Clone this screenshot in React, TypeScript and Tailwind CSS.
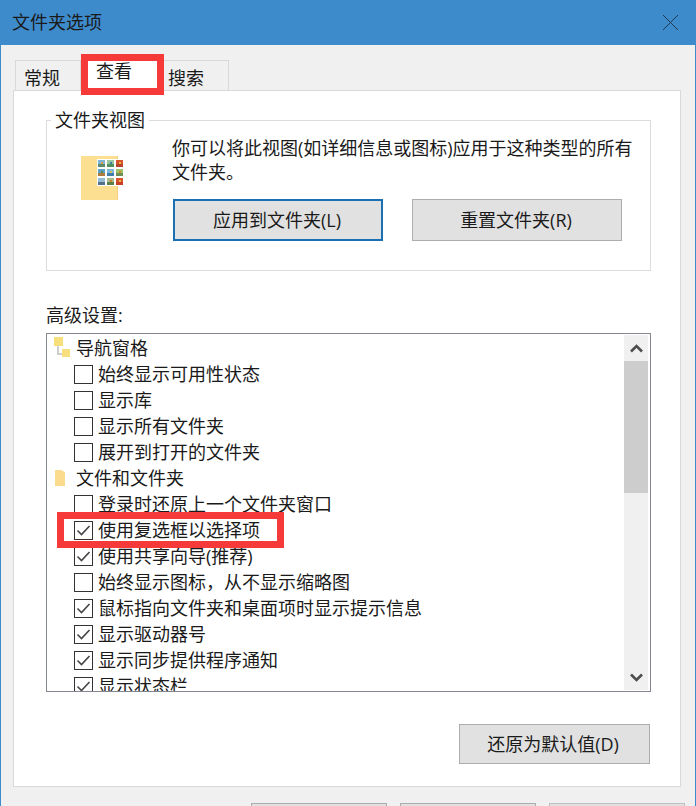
const rows: { label: string; checked?: boolean; icon?: 'nav' | 'folder' }[] = [
  { label: '导航窗格', icon: 'nav' },
  { label: '始终显示可用性状态' },
  { label: '显示库' },
  { label: '显示所有文件夹' },
  { label: '展开到打开的文件夹' },
  { label: '文件和文件夹', icon: 'folder' },
  { label: '登录时还原上一个文件夹窗口' },
  { label: '使用复选框以选择项', checked: true },
  { label: '使用共享向导(推荐)', checked: true },
  { label: '始终显示图标，从不显示缩略图' },
  { label: '鼠标指向文件夹和桌面项时显示提示信息', checked: true },
  { label: '显示驱动器号', checked: true },
  { label: '显示同步提供程序通知', checked: true },
  { label: '显示状态栏', checked: true },
];

// sky, ground and accent colours of the nine little pictures on the folder
const thumbs = [
  ['#7fb2d4', '#5d8a6a', '#e0a23c'],
  ['#9cc6a0', '#4f8f5a', '#3f7fae'],
  ['#d8552b', '#b8432a', '#e8b23c'],
  ['#5aa0c8', '#b07a3a', '#4f8f5a'],
  ['#7fb8dc', '#3f7fae', '#d9c25a'],
  ['#9cc36a', '#6d8f55', '#cf8a2f'],
  ['#8fbcd8', '#56708a', '#a8b8c0'],
  ['#a8b88a', '#5f7f4a', '#c9862f'],
  ['#d8552b', '#c8402a', '#efb040'],
];

function FolderThumbs() {
  return (
    <svg width="42" height="44" viewBox="0 0 42 44" className="shrink-0">
      <rect x="0" y="0" width="36" height="44" fill="#fcdf90" />
      <rect x="36" y="0" width="1" height="44" fill="#f3cf7a" />
      <rect x="16" y="3" width="26" height="27" fill="#ffffff" />
      {thumbs.map((c, i) => {
        const x = 17 + (i % 3) * 9;
        const y = 4 + Math.floor(i / 3) * 9;
        return (
          <g key={i}>
            <rect x={x} y={y} width="7" height="7" fill={c[0]} />
            <rect x={x} y={y + 4} width="7" height="3" fill={c[1]} />
            <rect x={x + 3} y={y + 2} width="2" height="2" fill={c[2]} />
          </g>
        );
      })}
    </svg>
  );
}

function NavIcon() {
  return (
    <svg width="18" height="22" viewBox="0 0 18 22" className="shrink-0">
      <path d="M4 9v8h5" fill="none" stroke="#cfcfcf" strokeWidth="2" />
      <rect x="0" y="0" width="9" height="9" fill="#f7df7c" />
      <rect x="8" y="12" width="8" height="8" fill="#f7df7c" />
    </svg>
  );
}

function FolderIcon() {
  return (
    <svg width="18" height="16" viewBox="0 0 18 16" className="shrink-0">
      <path d="M1 0h6l4 2v14H1z" fill="#fbdc8e" />
    </svg>
  );
}

function Checkbox({ checked }: { checked?: boolean }) {
  return (
    <span className="w-[19px] h-[19px] shrink-0 border border-[#333333] bg-white flex items-center justify-center">
      {checked && (
        <svg width="17" height="17" viewBox="0 0 17 17">
          <path d="M2.5 8.5l4 4 8-8.5" fill="none" stroke="#444444" strokeWidth="1.6" />
        </svg>
      )}
    </span>
  );
}

function Button({ label, className }: { label?: string; className: string }) {
  return (
    <button className={`bg-[#e1e1e1] flex items-center justify-center text-[18px] text-[#1a1a1a] ${className}`}>
      {label}
    </button>
  );
}

export default function App() {
  return (
    <div
      className="relative w-[696px] h-[806px] overflow-hidden bg-[#f0f0f0] flex flex-col text-[18px] leading-[24px] text-[#1a1a1a]"
      style={{ fontFamily: '"Open Sans", "Noto Sans CJK SC", sans-serif' }}
    >
      {/* Title bar */}
      <div className="h-[45px] shrink-0 bg-[#3e8bcc] flex items-center justify-between pl-[12px] pr-[17px] pb-px">
        <span>文件夹选项</span>
        <svg width="17" height="17" viewBox="0 0 17 17">
          <path d="M1 1l15 15M16 1L1 16" stroke="#1f3a52" strokeWidth="1" fill="none" />
        </svg>
      </div>

      <div className="flex-1 flex flex-col border-x border-[#3e8bcc]">
        {/* Tabs */}
        <div className="h-[45px] shrink-0 pl-[14px] flex items-end relative z-10">
          <div className="w-[66px] h-[30px] border-x border-t border-[#d9d9d9] pl-[8px] flex items-center pt-[4px]">常规</div>
          <div className="w-[77px] h-[35px] -mb-px bg-white pl-[15px] pt-[3px]">查看</div>
          <div className="w-[71px] h-[30px] border-r border-t border-[#d9d9d9] pl-[10px] flex items-center pt-[4px]">搜索</div>
        </div>

        {/* Panel */}
        <div className="ml-[12px] w-[668px] h-[697px] shrink-0 border border-[#d9d9d9] bg-white pl-[32px]">
          <div className="relative mt-[29px] w-[605px] h-[151px] border border-[#dcdcdc] flex pl-[34px]">
            <span className="absolute left-[4px] -top-[13px] bg-white px-[4px]">文件夹视图</span>
            <div className="pt-[35px]">
              <FolderThumbs />
            </div>
            <div className="ml-[49px] pt-[15px]">
              <p className="w-[470px]">你可以将此视图(如详细信息或图标)应用于这种类型的所有文件夹。</p>
              <div className="mt-[15px] ml-px flex gap-[29px]">
                <Button label="应用到文件夹(L)" className="w-[210px] h-[42px] border-2 border-[#1b6fb3] pr-[2px]" />
                <Button label="重置文件夹(R)" className="w-[210px] h-[42px] border border-[#adadad] pr-[2px]" />
              </div>
            </div>
          </div>

          <div className="mt-[32px] mb-[6px] h-[24px]">高级设置:</div>

          {/* Settings list */}
          <div className="w-[605px] h-[359px] border border-[#828790] flex">
            <div className="flex-1 overflow-hidden pt-px">
              {rows.map((row) => (
                <div key={row.label} className="h-[26px] flex items-center whitespace-nowrap">
                  {row.icon ? (
                    <div className="w-[29px] pl-[7px] flex items-center">
                      {row.icon === 'nav' ? <NavIcon /> : <FolderIcon />}
                    </div>
                  ) : (
                    <div className="ml-[27px] mr-[5px]">
                      <Checkbox checked={row.checked} />
                    </div>
                  )}
                  {row.label}
                </div>
              ))}
            </div>

            {/* Scrollbar */}
            <div className="w-[24px] mr-[2px] my-px bg-[#f0f0f0] flex flex-col">
              <div className="h-[26px] flex items-center justify-center">
                <svg width="13" height="9" viewBox="0 0 13 9">
                  <path d="M1 7.5l5.5-5.5 5.5 5.5" fill="none" stroke="#4d4d4d" strokeWidth="2.6" />
                </svg>
              </div>
              <div className="h-[132px] bg-[#cdcdcd]" />
              <div className="flex-1" />
              <div className="h-[26px] flex items-center justify-center">
                <svg width="13" height="9" viewBox="0 0 13 9">
                  <path d="M1 1.5l5.5 5.5 5.5-5.5" fill="none" stroke="#4d4d4d" strokeWidth="2.6" />
                </svg>
              </div>
            </div>
          </div>

          <div className="mt-[32px] w-[605px] pr-px flex justify-end">
            <Button label="还原为默认值(D)" className="w-[191px] h-[40px] border border-[#adadad] pr-[3px]" />
          </div>
        </div>

        {/* Dialog buttons, only their top edge is inside the window */}
        <div className="mt-[16px] ml-[250px] flex gap-[13px]">
          <Button className="w-[136px] h-[40px] border border-[#adadad]" />
          <Button className="w-[136px] h-[40px] border border-[#adadad]" />
          <Button className="w-[136px] h-[40px] border border-[#bfbfbf]" />
        </div>
      </div>

      {/* Red annotation boxes */}
      <div className="absolute z-20 left-[81px] top-[54px] w-[83px] h-[41px] border-[7px] border-[#f63a3a]" />
      <div className="absolute z-20 left-[57px] top-[512px] w-[227px] h-[36px] border-[7px] border-[#f63a3a]" />
    </div>
  );
}
